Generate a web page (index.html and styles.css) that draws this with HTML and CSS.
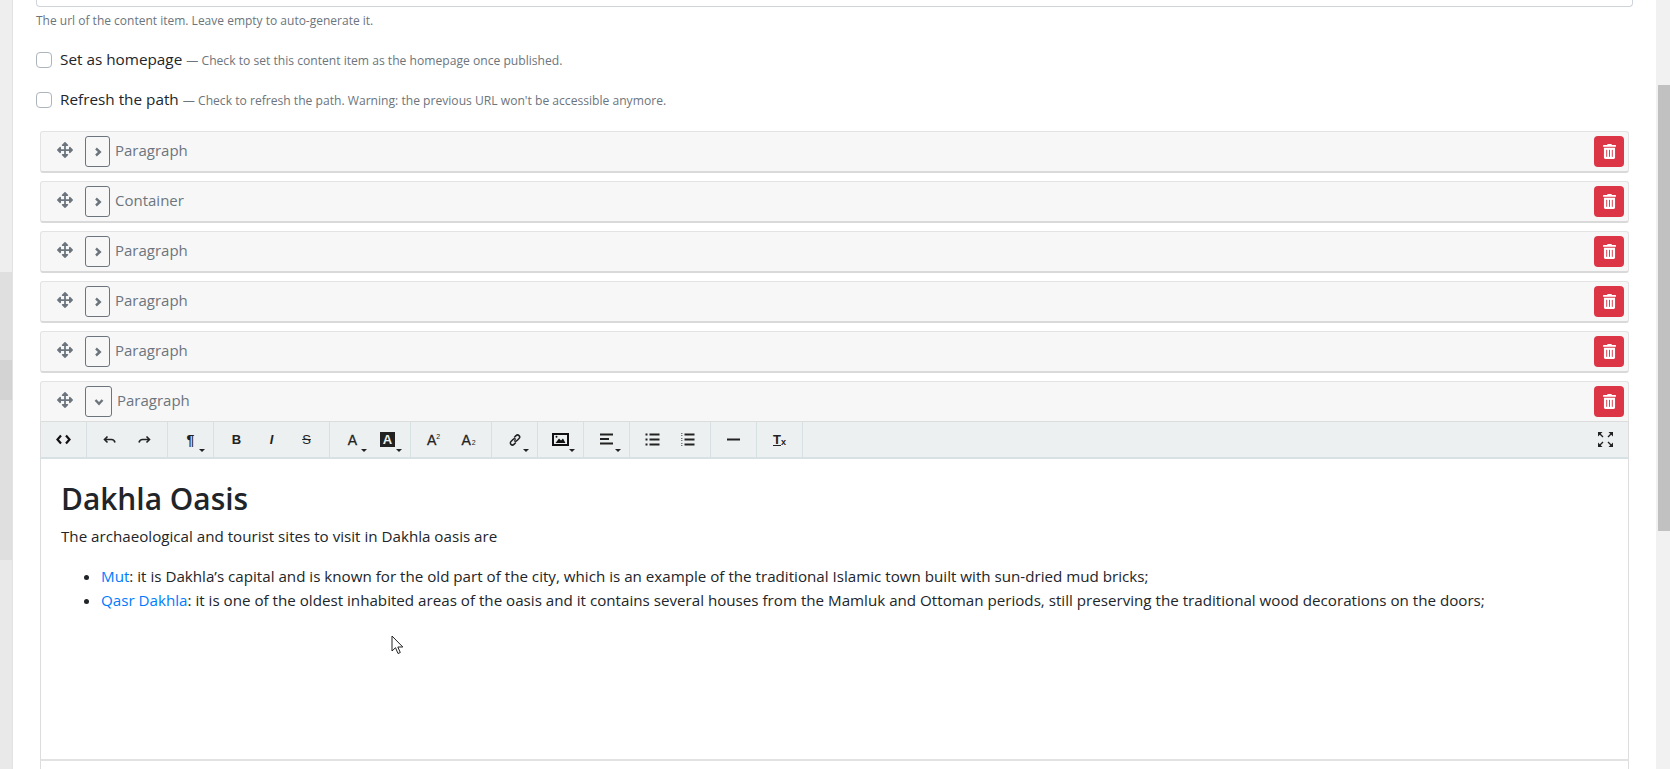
FILE: index.html
```html
<!DOCTYPE html>
<html lang="en">
<head>
    <meta charset="UTF-8">
    <meta name="viewport" content="width=device-width, initial-scale=1.0">
    <title>Edit content item</title>
    <link rel="stylesheet" href="styles.css">
</head>
<body>
    <svg class="defs" width="0" height="0">
        <symbol id="i-move" viewBox="0 0 512 512"><path d="M352.201 425.775l-79.196 79.196c-9.373 9.373-24.568 9.373-33.941 0l-79.196-79.196c-15.119-15.119-4.411-40.971 16.971-40.97h51.162L228 284H127.196v51.162c0 21.382-25.851 32.09-40.971 16.971L7.029 272.937c-9.373-9.373-9.373-24.569 0-33.941L86.225 159.8c15.119-15.119 40.971-4.411 40.971 16.971V228H228V127.196h-51.23c-21.382 0-32.09-25.851-16.971-40.971l79.196-79.196c9.373-9.373 24.568-9.373 33.941 0l79.196 79.196c15.119 15.119 4.411 40.971-16.971 40.971h-51.162V228h100.804v-51.162c0-21.382 25.851-32.09 40.97-16.971l79.196 79.196c9.373 9.373 9.373 24.569 0 33.941L425.773 352.2c-15.119 15.119-40.971 4.411-40.97-16.971V284H284v100.804h51.23c21.382 0 32.09 25.851 16.971 40.971z"/></symbol>
        <symbol id="i-trash" viewBox="0 0 448 512"><path d="M32 464a48 48 0 0 0 48 48h288a48 48 0 0 0 48-48V128H32zm272-256a16 16 0 0 1 32 0v224a16 16 0 0 1-32 0zm-96 0a16 16 0 0 1 32 0v224a16 16 0 0 1-32 0zm-96 0a16 16 0 0 1 32 0v224a16 16 0 0 1-32 0zM432 32H312l-9.4-18.7A24 24 0 0 0 281.1 0H166.8a23.72 23.72 0 0 0-21.4 13.3L136 32H16A16 16 0 0 0 0 48v32a16 16 0 0 0 16 16h416a16 16 0 0 0 16-16V48a16 16 0 0 0-16-16z"/></symbol>
        <symbol id="i-right" viewBox="0 0 10 10"><path d="M3 1.5 6.800 5 3 8.500" fill="none" stroke="currentColor" stroke-width="2.400"/></symbol>
        <symbol id="i-down" viewBox="0 0 10 10"><path d="M1.500 3 5 6.800 8.500 3" fill="none" stroke="currentColor" stroke-width="2.400"/></symbol>
    </svg>

    <div class="app">
        <div class="side">
            <div class="side-a"></div>
            <div class="side-b"></div>
            <div class="side-c"></div>
            <div class="side-b side-tall"></div>
            <div class="side-d"></div>
        </div>

        <main class="main">
            <div class="input-end"></div>
            <div class="help">The url of the content item. Leave empty to auto-generate it.</div>

            <label class="check check-first">
                <span class="box"></span>
                <span class="check-label">Set as homepage</span>
                <span class="help">&mdash; Check to set this content item as the homepage once published.</span>
            </label>
            <label class="check">
                <span class="box"></span>
                <span class="check-label">Refresh the path</span>
                <span class="help">&mdash; Check to refresh the path. Warning: the previous URL won't be accessible anymore.</span>
            </label>

            <div class="rows">
                <div class="row">
                    <svg class="move"><use href="#i-move"/></svg>
                    <button class="toggle"><svg><use href="#i-right"/></svg></button>
                    <span class="row-name">Paragraph</span>
                    <button class="del"><svg><use href="#i-trash"/></svg></button>
                </div>
                <div class="row">
                    <svg class="move"><use href="#i-move"/></svg>
                    <button class="toggle"><svg><use href="#i-right"/></svg></button>
                    <span class="row-name">Container</span>
                    <button class="del"><svg><use href="#i-trash"/></svg></button>
                </div>
                <div class="row">
                    <svg class="move"><use href="#i-move"/></svg>
                    <button class="toggle"><svg><use href="#i-right"/></svg></button>
                    <span class="row-name">Paragraph</span>
                    <button class="del"><svg><use href="#i-trash"/></svg></button>
                </div>
                <div class="row">
                    <svg class="move"><use href="#i-move"/></svg>
                    <button class="toggle"><svg><use href="#i-right"/></svg></button>
                    <span class="row-name">Paragraph</span>
                    <button class="del"><svg><use href="#i-trash"/></svg></button>
                </div>
                <div class="row">
                    <svg class="move"><use href="#i-move"/></svg>
                    <button class="toggle"><svg><use href="#i-right"/></svg></button>
                    <span class="row-name">Paragraph</span>
                    <button class="del"><svg><use href="#i-trash"/></svg></button>
                </div>

                <div class="row row-open">
                    <svg class="move"><use href="#i-move"/></svg>
                    <button class="toggle toggle-open"><svg><use href="#i-down"/></svg></button>
                    <span class="row-name">Paragraph</span>
                    <button class="del"><svg><use href="#i-trash"/></svg></button>
                </div>

                <div class="toolbar">
                    <div class="group">
                        <span class="tool"><svg viewBox="0 0 17 17"><path d="M6 4.500 2.500 8.500 6 12.500M11 4.500l3.500 4-3.500 4" fill="none" stroke="#111" stroke-width="2.200"/></svg></span>
                    </div>
                    <div class="group">
                        <span class="tool"><svg viewBox="0 0 17 17"><path d="M6.500 5.500 3.500 8.500l3 3M3.500 8.500h7c2 0 3 1 3.500 3" fill="none" stroke="#222" stroke-width="1.600"/></svg></span>
                        <span class="tool"><svg viewBox="0 0 17 17"><path d="M10.500 5.500l3 3-3 3M13.500 8.500h-7c-2 0-3 1-3.500 3" fill="none" stroke="#222" stroke-width="1.600"/></svg></span>
                    </div>
                    <div class="group">
                        <span class="tool tool-drop glyph">&para;</span>
                    </div>
                    <div class="group">
                        <span class="tool glyph glyph-b">B</span>
                        <span class="tool glyph glyph-i">I</span>
                        <span class="tool glyph glyph-s">S</span>
                    </div>
                    <div class="group">
                        <span class="tool tool-drop glyph glyph-a">A</span>
                        <span class="tool tool-drop glyph"><span class="glyph-inv">A</span></span>
                    </div>
                    <div class="group">
                        <span class="tool glyph glyph-a"><span>A<sup class="mini">2</sup></span></span>
                        <span class="tool glyph glyph-a"><span>A<span class="mini mini-low">2</span></span></span>
                    </div>
                    <div class="group">
                        <span class="tool tool-drop"><svg class="icon-link" viewBox="0 0 17 17"><path d="M7.500 5.500 9.800 3.200a2.500 2.500 0 0 1 3.600 3.600L11 9.200a2.500 2.500 0 0 1-3.500 0M9.500 11.500 7.200 13.800a2.500 2.500 0 0 1-3.600-3.600L6 7.800a2.500 2.500 0 0 1 3.500 0" fill="none" stroke="#222" stroke-width="1.800"/></svg></span>
                    </div>
                    <div class="group">
                        <span class="tool tool-drop"><svg viewBox="0 0 17 17"><rect x="1" y="3" width="15" height="11" fill="none" stroke="#111" stroke-width="2"/><path d="M3.500 12 7 7.500 9 9.500 11 7.500 13.500 12z" fill="#111"/><circle cx="4.500" cy="5.800" r="1" fill="#111"/></svg></span>
                    </div>
                    <div class="group">
                        <span class="tool tool-drop"><svg viewBox="0 0 17 17"><path d="M2 3.500h13M2 8h9M2 12.500h13" stroke="#222" stroke-width="2"/></svg></span>
                    </div>
                    <div class="group">
                        <span class="tool"><svg viewBox="0 0 17 17"><path d="M5.500 3.500h10M5.500 8.500h10M5.500 13.500h10" stroke="#222" stroke-width="1.800"/><path d="M1.500 3.500h2M1.500 8.500h2M1.500 13.500h2" stroke="#222" stroke-width="1.800"/></svg></span>
                        <span class="tool"><svg viewBox="0 0 17 17"><path d="M5.500 3.500h10M5.500 8.500h10M5.500 13.500h10" stroke="#222" stroke-width="1.800"/><path d="M2 2.500h1.500M2 4.500h1.500M2 7.500h1.500M2 9.500h1.500M2 12.500h1.500M2 14.500h1.500" stroke="#777" stroke-width="1"/></svg></span>
                    </div>
                    <div class="group">
                        <span class="tool"><svg viewBox="0 0 17 17"><path d="M2 8.500h13" stroke="#222" stroke-width="2"/></svg></span>
                    </div>
                    <div class="group">
                        <span class="tool glyph glyph-t"><span><span class="under">T</span><span class="mini-x">x</span></span></span>
                    </div>
                    <span class="tool tool-end"><svg viewBox="0 0 15 15"><path d="M0 0h4.500L0 4.500zM15 0h-4.500L15 4.500zM0 15h4.500L0 10.500zM15 15h-4.500l4.500-4.500z" fill="#222"/><path d="M1.500 1.500l3.500 3.500M13.500 1.500 10 5M1.500 13.500 5 10M13.500 13.500 10 10" stroke="#222" stroke-width="1.400"/></svg></span>
                </div>

                <div class="editor">
                    <h1>Dakhla Oasis</h1>
                    <p>The archaeological and tourist sites to visit in Dakhla oasis are</p>
                    <ul>
                        <li><a href="#">Mut</a>: it is Dakhla&rsquo;s capital and is known for the old part of the city, which is an example of the traditional Islamic town built with sun-dried mud bricks;</li>
                        <li><a href="#">Qasr Dakhla</a>: it is one of the oldest inhabited areas of the oasis and it contains several houses from the Mamluk and Ottoman periods, still preserving the traditional wood decorations on the doors;</li>
                    </ul>
                </div>
                <div class="editor-foot"></div>
            </div>
        </main>

        <div class="scrollbar"><div class="thumb"></div></div>
    </div>

    <svg class="cursor" viewBox="0 0 13 21"><path d="M1 1v15l3.500-3.300L7 18.500l2.300-1-2.500-5.500h5z" fill="#fff" stroke="#222" stroke-width="1"/></svg>
</body>
</html>
```

FILE: styles.css
```css
* {
    box-sizing: border-box;
}
html, body {
    height: 100%;
    margin: 0;
    overflow: hidden;
}
body {
    font-family: "Open Sans", "Noto Sans", sans-serif;
    font-size: 15px;
    color: #212529;
    background-color: white;
}
.defs {
    display: block;
    height: 0;
}
.app {
    display: flex;
    height: 769px;
    overflow: hidden;
}

/* left strip */
.side {
    width: 13px;
    display: flex;
    flex-direction: column;
    border-right: 1px solid #e2e2e2;
    background-color: #e9e9e9;
}
.side-a {
    height: 272px;
    background-color: #eeeeee;
}
.side-b {
    height: 88px;
    background-color: #dfdfdf;
}
.side-c {
    height: 40px;
    background-color: #d3d3d3;
}
.side-tall {
    height: 160px;
}
.side-d {
    flex: 1;
}

/* main column */
.main {
    flex: 1;
    min-width: 0;
    padding: 0 23px;
}
.input-end {
    height: 7px;
    border: 1px solid #ced4da;
    border-top: none;
    border-radius: 0 0 4px 4px;
}
.help {
    font-size: 12px;
    line-height: 19px;
    color: #6c757d;
}
.main > .help {
    margin-top: 4px;
}
.check {
    display: flex;
    align-items: center;
    height: 24px;
    margin-top: 16px;
    white-space: pre;
}
.check-first {
    margin-top: 18px;
}
.check .help {
    font-size: 12.12px;
}
.box {
    width: 16px;
    height: 16px;
    margin-right: 8px;
    border: 1px solid #adb5bd;
    border-radius: 4px;
    background-color: white;
}
.check-label {
    margin-right: 4px;
    margin-bottom: 2px;
    font-size: 15.3px;
}

/* content rows */
.rows {
    margin: 19px 4px 0;
}
.row {
    display: flex;
    align-items: center;
    height: 42px;
    margin-bottom: 8px;
    padding: 0 4px 0 16px;
    background-color: #f7f7f7;
    border: 1px solid #e3e3e3;
    border-bottom: 2px solid #d9d9d9;
    border-radius: 3px;
}
.row-open {
    height: 41px;
    margin-bottom: 0;
    border-bottom: 1px solid #dcdcdc;
    border-radius: 3px 3px 0 0;
}
.move {
    width: 16px;
    height: 16px;
    margin-right: 12px;
    margin-bottom: 4px;
    fill: #6c757d;
}
.toggle {
    display: flex;
    align-items: center;
    justify-content: center;
    width: 25px;
    height: 31px;
    padding: 0;
    margin-right: 5px;
    color: #6c757d;
    background: none;
    border: 1px solid #6c757d;
    border-radius: 3px;
}
.toggle-open {
    width: 27px;
}
.toggle svg {
    width: 10px;
    height: 10px;
}
.row-name {
    flex: 1;
    margin-bottom: 4px;
    color: #6c757d;
}
.del {
    display: flex;
    align-items: center;
    justify-content: center;
    width: 30px;
    height: 31px;
    padding: 0;
    border: none;
    border-radius: 4px;
    background-color: #dc3545;
}
.del svg {
    width: 13px;
    height: 15px;
    fill: white;
}

/* editor toolbar */
.toolbar {
    display: flex;
    height: 37px;
    background-color: #ecf0f1;
    border-left: 1px solid #dddddd;
    border-right: 1px solid #dddddd;
    border-bottom: 2px solid #d7e0e2;
}
.group {
    display: flex;
    padding: 0 5px;
    border-right: 1px solid #d7e0e2;
}
.tool {
    position: relative;
    display: flex;
    align-items: center;
    justify-content: center;
    width: 35px;
    color: #222222;
}
.tool svg {
    width: 17px;
    height: 17px;
}
.tool svg.icon-link {
    width: 14px;
    height: 14px;
}
.tool-end {
    margin-left: auto;
    margin-right: 5px;
}
.tool-end svg {
    width: 15px;
    height: 15px;
}
.tool-drop::after {
    content: "";
    position: absolute;
    right: 3px;
    bottom: 5px;
    border-top: 3px solid #222222;
    border-left: 3px solid transparent;
    border-right: 3px solid transparent;
}
.glyph {
    font-family: "Liberation Sans", Arial, sans-serif;
    font-size: 14px;
    font-weight: 700;
}
.glyph-b {
    font-size: 13px;
}
.glyph-i {
    font-size: 13px;
    font-style: italic;
}
.glyph-s {
    font-size: 13px;
    font-weight: 400;
    text-decoration: line-through;
}
.glyph-a {
    font-weight: 400;
    -webkit-text-stroke: 0.3px #222222;
}
.glyph-inv {
    display: block;
    width: 15px;
    height: 15px;
    line-height: 15px;
    text-align: center;
    font-size: 13px;
    color: #ecf0f1;
    background-color: #222222;
}
.glyph-t {
    font-size: 13px;
}
.under {
    text-decoration: underline;
}
.mini {
    font-size: 7px;
    line-height: 0;
    -webkit-text-stroke: 0;
}
.mini-low {
    margin-left: 1px;
}
.mini-x {
    font-size: 9px;
    line-height: 0;
    vertical-align: -1px;
}

/* editor body */
.editor {
    height: 302px;
    padding: 21px 20px 0;
    border-left: 1px solid #dddddd;
    border-right: 1px solid #dddddd;
    border-bottom: 2px solid #e2e2e2;
    font-size: 15.17px;
    line-height: 24px;
}
.editor h1 {
    margin: 0 0 6px;
    font-size: 29.9px;
    line-height: 38px;
    font-weight: 600;
}
.editor p {
    margin: 0 0 16px;
}
.editor ul {
    margin: 0;
    padding-left: 40px;
}
.editor a {
    color: #007bff;
    text-decoration: none;
}
.editor-foot {
    height: 20px;
    border-left: 1px solid #dddddd;
    border-right: 1px solid #dddddd;
}

/* scrollbar */
.scrollbar {
    width: 14px;
    padding: 85px 0 0 2px;
    background-color: #f1f1f1;
}
.thumb {
    height: 446px;
    background-color: #c1c1c1;
}

.cursor {
    position: absolute;
    left: 391px;
    top: 635px;
    width: 13px;
    height: 21px;
}
```
